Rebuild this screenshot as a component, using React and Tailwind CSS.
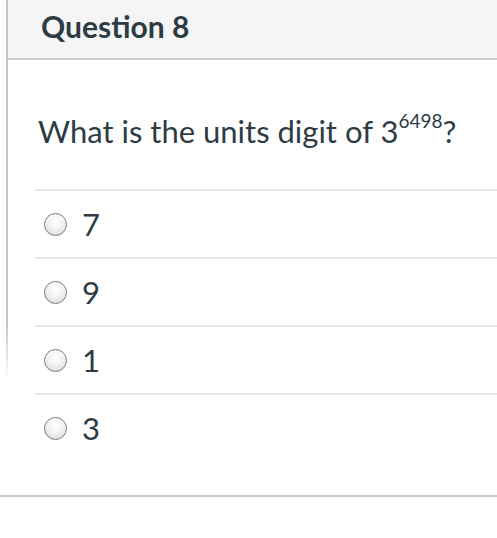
import React from 'react';

const options = ['7', '9', '1', '3'];

function Radio() {
  return (
    <span className="block w-[23px] h-[23px] rounded-full border-[1.5px] border-[#7a7a7a] bg-[radial-gradient(circle_at_50%_35%,#ffffff_0%,#f2f2f2_45%,#d2d2d2_100%)] shadow-[inset_0_1px_1px_rgba(255,255,255,0.9)]" />
  );
}

export default function App() {
  return (
    <div className="w-full h-[538px] bg-white text-[#2d3b45] font-['Lato','Liberation_Sans',sans-serif] overflow-hidden">
      <div className="border-b-2 border-[#c9c9c9]">
        <div className="flex">
          <div className="w-[6px] shrink-0" />
          <div className="w-[2px] h-[380px] shrink-0 bg-[linear-gradient(to_bottom,#c4c4c4_0%,#c4c4c4_85%,rgba(196,196,196,0)_100%)]" />
          <div className="flex-1 min-w-0">
            <div className="h-[60px] bg-[#f5f5f5] border-b-2 border-[#c7cdd1] flex items-center pl-[33px]">
              <h2 className="text-[30px] font-bold leading-none -mt-[6px]">Question 8</h2>
            </div>
            <div className="pl-[30px] pt-[51px] pb-[38px]">
              <p className="text-[31px] leading-[40px] whitespace-nowrap">
                What is the units digit of 3<sup className="text-[19px] -top-[15px]">6498</sup>?
              </p>
            </div>
            <ul className="ml-[27px] pb-[34px]">
              {options.map((opt) => (
                <li
                  key={opt}
                  className="h-[68px] flex items-center border-t-2 border-[#e6e6e6] pl-[9px] gap-[15px]"
                >
                  <Radio />
                  <span className="text-[31px] leading-none">{opt}</span>
                </li>
              ))}
            </ul>
          </div>
        </div>
      </div>
    </div>
  );
}
